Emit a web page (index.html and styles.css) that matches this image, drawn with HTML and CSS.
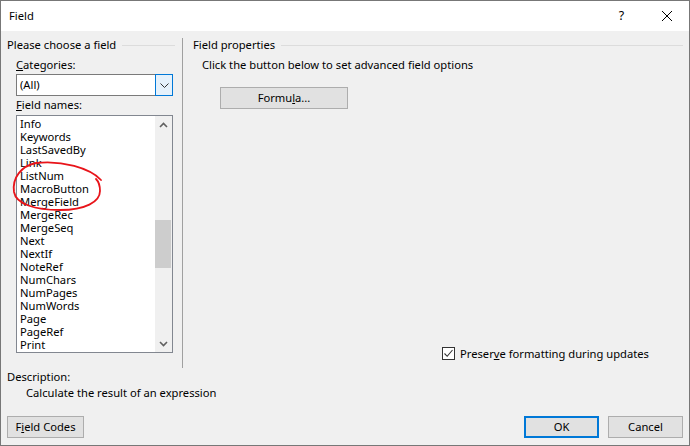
FILE: index.html
```html
<!DOCTYPE html>
<html>
<head>
<meta charset="utf-8">
<link rel="stylesheet" href="styles.css">
</head>
<body>
<div class="window">
  <div class="titlebar">
    <span class="title">Field</span>
    <span class="capbtn help">?</span>
    <span class="capbtn close">
      <svg width="12" height="12" viewBox="0 0 12 12"><path d="M1 1 L11 11 M11 1 L1 11" stroke="#000" stroke-width="1" fill="none"/></svg>
    </span>
  </div>
  <div class="client">
    <div class="main">
      <div class="left">
        <div class="group-head"><span class="gh-text">Please choose a field</span><i class="rule"></i></div>
        <div class="label indent"><u>C</u>ategories:</div>
        <div class="combo indent">
          <span class="combo-text">(All)</span>
          <span class="combo-btn"><svg width="9" height="5" viewBox="0 0 9 5"><path d="M0.5 0.5 L4.5 4.5 L8.5 0.5" stroke="#333" stroke-width="1" fill="none"/></svg></span>
        </div>
        <div class="label label2 indent"><u>F</u>ield names:</div>
        <div class="listbox indent">
          <ul class="items">
            <li>Info</li>
            <li>Keywords</li>
            <li>LastSavedBy</li>
            <li>Link</li>
            <li>ListNum</li>
            <li>MacroButton</li>
            <li>MergeField</li>
            <li>MergeRec</li>
            <li>MergeSeq</li>
            <li>Next</li>
            <li>NextIf</li>
            <li>NoteRef</li>
            <li>NumChars</li>
            <li>NumPages</li>
            <li>NumWords</li>
            <li>Page</li>
            <li>PageRef</li>
            <li>Print</li>
          </ul>
          <div class="vscroll">
            <div class="arrow"><svg width="9" height="6" viewBox="0 0 9 6"><path d="M1 5 L4.5 1.5 L8 5" stroke="#606060" stroke-width="1.6" fill="none"/></svg></div>
            <div class="track"><div class="thumb"></div></div>
            <div class="arrow"><svg width="9" height="6" viewBox="0 0 9 6"><path d="M1 1 L4.5 4.5 L8 1" stroke="#606060" stroke-width="1.6" fill="none"/></svg></div>
          </div>
        </div>
      </div>
      <div class="sep"></div>
      <div class="right">
        <div class="group-head"><span class="gh-text">Field properties</span><i class="rule"></i></div>
        <div class="hint">Click the button below to set advanced field options</div>
        <div class="btn formula">Formu<u>l</u>a...</div>
        <div class="check-row">
          <span class="checkbox"><svg width="11" height="11" viewBox="0 0 11 11"><path d="M1.5 5.5 L4.2 8.3 L9.5 2" stroke="#333" stroke-width="1.1" fill="none"/></svg></span>
          <span>Preser<u>v</u>e formatting during updates</span>
        </div>
      </div>
    </div>
    <div class="desc">
      <div class="desc-label">Description:</div>
      <div class="desc-text">Calculate the result of an expression</div>
    </div>
    <div class="footer">
      <div class="btn codes">F<u>i</u>eld Codes</div>
      <div class="btn ok">OK</div>
      <div class="btn cancel">Cancel</div>
    </div>
  </div>
  <svg class="annotation" width="690" height="446" viewBox="0 0 690 446">
    <path d="M101 180 C90 168, 62 160, 36 163 C21 166, 12 178, 14 192 C16 204, 35 210, 60 210 C85 210, 100 202, 100 191 C100 186, 99 182, 96 179" stroke="#e8141a" stroke-width="1.8" fill="none" stroke-linecap="round"/>
  </svg>
</div>
</body>
</html>
```
FILE: styles.css
```css
* { box-sizing: border-box; }
html, body { margin: 0; padding: 0; }
body {
  font-family: "Noto Sans", "Open Sans", sans-serif;
  font-size: 11.2px;
  color: #000;
  background: #fff;
}
u { text-decoration: underline; text-underline-offset: 1px; }

.window {
  position: relative;
  width: 690px;
  height: 446px;
  border: 1px solid #777;
  display: flex;
  flex-direction: column;
  background: #f0f0f0;
}

.titlebar {
  height: 30px;
  background: #fff;
  display: flex;
  align-items: center;
  padding-left: 8px;
}
.title { flex: 1; padding-bottom: 2px; }
.capbtn {
  width: 45px;
  height: 30px;
  display: flex;
  align-items: center;
  justify-content: center;
}
.help { font-size: 12.5px; padding-bottom: 2px; }

.client {
  flex: 1;
  display: flex;
  flex-direction: column;
}

.main {
  display: flex;
  height: 337px;
  padding-top: 7px;
}

.left {
  width: 181px;
  padding-left: 6px;
}

.group-head {
  display: flex;
  align-items: center;
  height: 15px;
  line-height: 15px;
  white-space: nowrap;
}
.gh-text { padding-bottom: 2px; }
.rule {
  flex: 1;
  height: 1px;
  background: #dcdcdc;
  margin-left: 6px;
}
.left .rule { margin-right: 7px; }

.indent { margin-left: 9px; width: 157px; }

.label {
  line-height: 15px;
  height: 15px;
  margin-top: 4px;
}
.combo {
  display: flex;
  height: 22px;
  margin-top: 2px;
  border: 1px solid #7a7a7a;
  background: #fff;
}
.label2 { margin-top: 1px; }
.listbox { margin-top: 3px; }

.combo-text {
  flex: 1;
  padding-left: 3px;
  line-height: 19px;
}
.combo-btn {
  width: 18px;
  margin: -1px -1px -1px 0;
  border: 1px solid #0078d7;
  background: #e5f1fb;
  display: flex;
  align-items: center;
  justify-content: center;
}

.listbox {
  display: flex;
  height: 238px;
  border: 1px solid #828790;
  background: #fff;
}
.items {
  flex: 1;
  list-style: none;
  margin: 0;
  padding: 1px 0 0 3px;
  line-height: 13px;
}
.items li { height: 13px; }
.vscroll {
  width: 17px;
  display: flex;
  flex-direction: column;
  background: #f0f0f0;
}
.arrow {
  height: 17px;
  display: flex;
  align-items: center;
  justify-content: center;
}
.track { flex: 1; }
.thumb {
  margin: 87px 1px 0 0;
  height: 48px;
  background: #cdcdcd;
}

.sep {
  width: 1px;
  background: #a0a0a0;
}

.right {
  flex: 1;
  padding: 0 6px 7px 10px;
  display: flex;
  flex-direction: column;
}
.hint {
  margin-top: 4px;
  padding-left: 9px;
  line-height: 15px;
}

.btn {
  height: 22px;
  border: 1px solid #adadad;
  background: #e1e1e1;
  display: flex;
  align-items: center;
  justify-content: center;
  line-height: 15px;
  padding-bottom: 1px;
}
.formula {
  width: 128px;
  margin-top: 15px;
  margin-left: 27px;
}

.check-row {
  margin-top: auto;
  margin-left: 249px;
  display: flex;
  align-items: center;
  height: 15px;
  white-space: nowrap;
}
.checkbox {
  width: 13px;
  height: 13px;
  border: 1px solid #333;
  background: #fff;
  margin-right: 5px;
  display: flex;
  align-items: center;
  justify-content: center;
}

.desc {
  margin-top: 1px;
  padding-left: 6px;
  line-height: 15px;
}
.desc-text {
  margin-top: 1px;
  padding-left: 19px;
}

.footer {
  margin-top: auto;
  margin-bottom: 7px;
  padding: 0 6px;
  display: flex;
}
.codes { width: 77px; }
.ok {
  width: 75px;
  margin-left: auto;
  border-color: #0078d7;
  box-shadow: inset 0 0 0 1px #0078d7;
}
.cancel {
  width: 75px;
  margin-left: 9px;
}

.annotation {
  position: absolute;
  left: -1px;
  top: -1px;
  pointer-events: none;
}
```
